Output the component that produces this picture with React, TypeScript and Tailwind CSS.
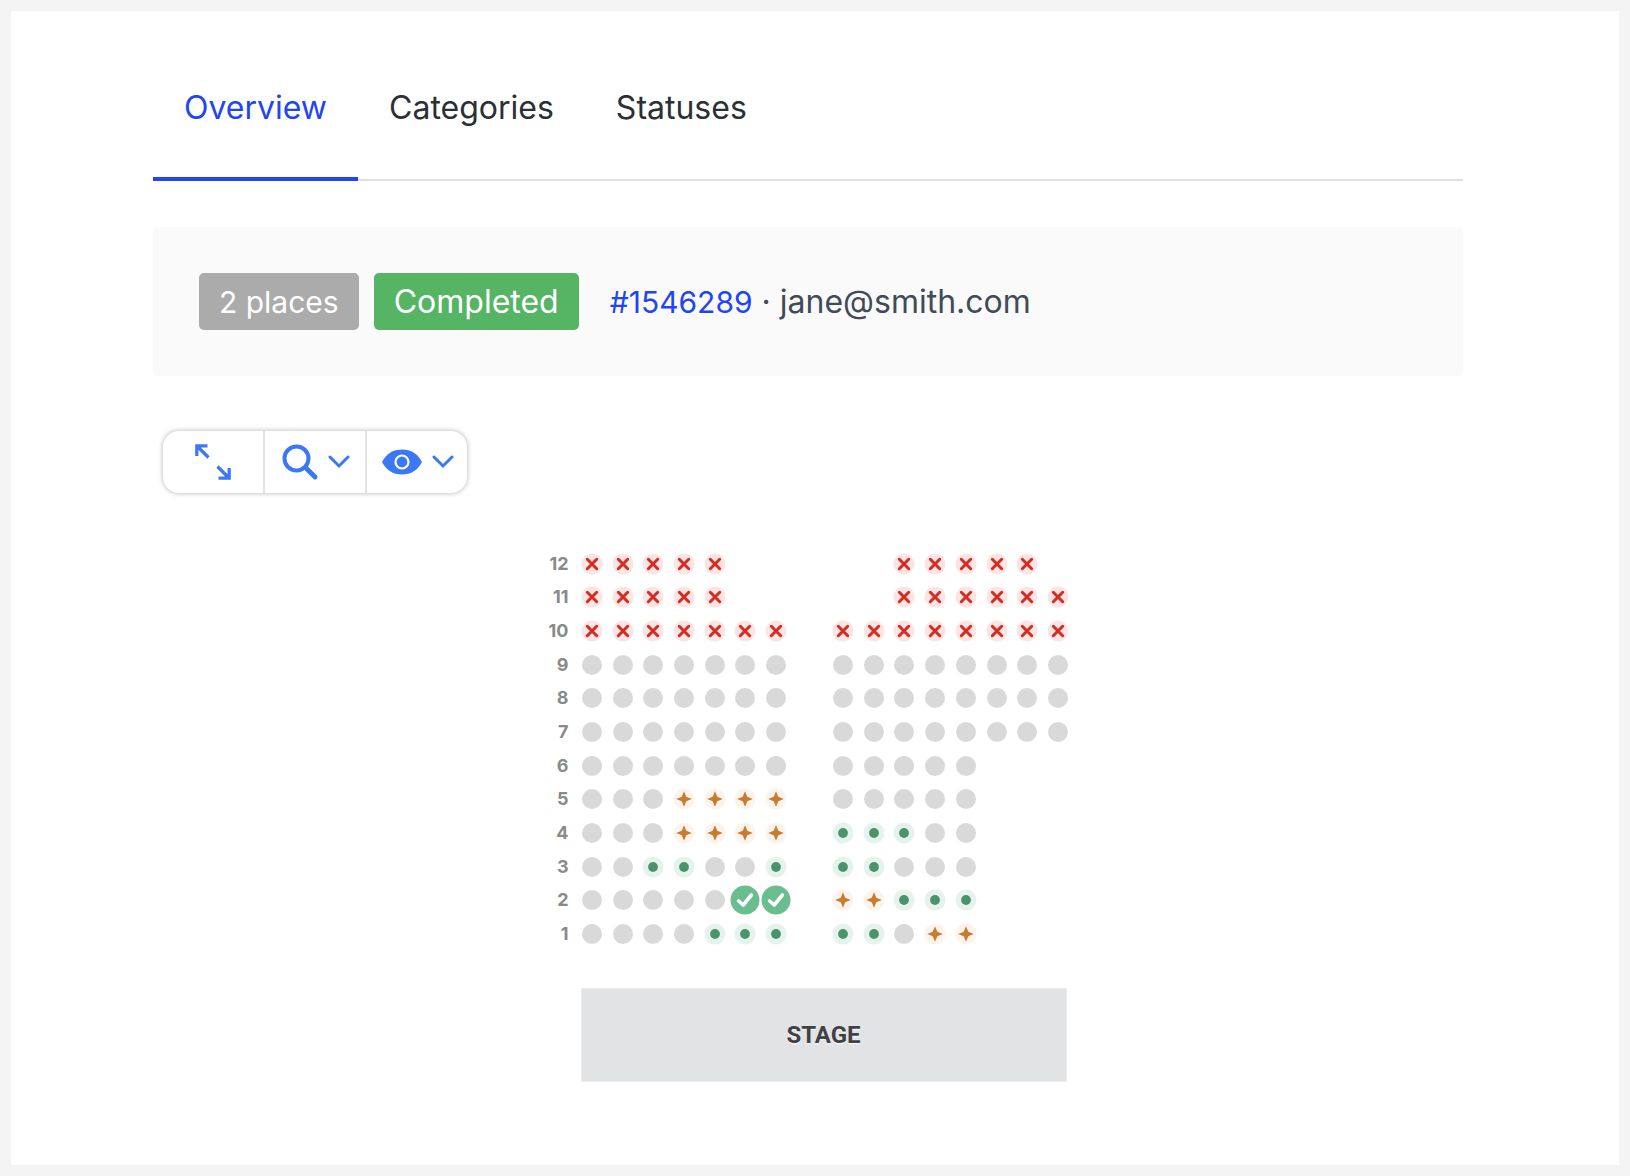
import React from "react";

type SeatKind = "x" | "o" | "s" | "g" | "c" | ".";

const rows: { label: string; left: string; right: string }[] = [
  { label: "12", left: "xxxxx..", right: "..xxxxx." },
  { label: "11", left: "xxxxx..", right: "..xxxxxx" },
  { label: "10", left: "xxxxxxx", right: "xxxxxxxx" },
  { label: "9", left: "ooooooo", right: "oooooooo" },
  { label: "8", left: "ooooooo", right: "oooooooo" },
  { label: "7", left: "ooooooo", right: "oooooooo" },
  { label: "6", left: "ooooooo", right: "ooooo..." },
  { label: "5", left: "ooossss", right: "ooooo..." },
  { label: "4", left: "ooossss", right: "gggoo..." },
  { label: "3", left: "ooggoog", right: "ggooo..." },
  { label: "2", left: "ooooocc", right: "ssggg..." },
  { label: "1", left: "ooooggg", right: "ggoss..." },
];

const kindNames: Record<string, string> = {
  x: "blocked",
  o: "unavailable",
  s: "premium",
  g: "available",
  c: "selected",
};

function SeatGlyph({ kind }: { kind: SeatKind }) {
  return (
    <svg viewBox="-15 -15 30 30" className="size-[30px] shrink-0" aria-hidden="true">
      {kind === "o" && <circle r="10" fill="#d9d9d9" />}
      {kind === "x" && (
        <>
          <circle r="10.5" fill="#fbe5e4" />
          <path d="M-4.7-4.7 4.7 4.7M4.7-4.7-4.7 4.7" stroke="#d42c20" strokeWidth="3" strokeLinecap="round" />
        </>
      )}
      {kind === "s" && (
        <>
          <circle r="10.5" fill="#fcf4ec" />
          <path d="M0-7.8 2.3-2.3 7.8 0 2.3 2.3 0 7.8-2.3 2.3-7.8 0-2.3-2.3Z" fill="#c97b30" />
        </>
      )}
      {kind === "g" && (
        <>
          <circle r="10.5" fill="#e6f2ec" />
          <circle r="4.9" fill="#4b936a" />
        </>
      )}
      {kind === "c" && (
        <>
          <circle r="14.5" fill="#69bd8f" />
          <path d="M-6.4 1-1.8 5 6.4-5" fill="none" stroke="#fff" strokeWidth="3.6" strokeLinecap="round" strokeLinejoin="round" />
        </>
      )}
    </svg>
  );
}

function Seat({ kind, name }: { kind: SeatKind; name: string }) {
  if (kind === ".") return <span />;
  return (
    <button type="button" aria-label={`${name}, ${kindNames[kind]}`} className="flex items-center justify-center">
      <SeatGlyph kind={kind} />
    </button>
  );
}

function Chevron() {
  return (
    <svg viewBox="0 0 22 14" className="h-3.5 w-[22px]" fill="none" stroke="#3b78f5" strokeWidth="3" strokeLinecap="round" aria-hidden="true">
      <path d="M2 2 11 11 20 2" strokeLinejoin="miter" />
    </svg>
  );
}

function Tabs() {
  const tabs = ["Overview", "Categories", "Statuses"];
  return (
    <nav className="flex h-[118px] border-b-2 border-[#e0e0e0] text-[32px] leading-10 text-[#2b3035]">
      {tabs.map((tab, i) => (
        <a
          key={tab}
          href={`#${tab.toLowerCase()}`}
          aria-current={i === 0 ? "page" : undefined}
          className={
            i === 0
              ? "-mb-0.5 border-b-4 border-[#2145f3] px-[31px] pt-[25px] text-[#2145f3]"
              : "px-[31px] pt-[25px]"
          }
        >
          {tab}
        </a>
      ))}
    </nav>
  );
}

function Toolbar() {
  return (
    <div className="ml-2.5 mt-[55px] flex h-[62px] w-fit divide-x-2 divide-[#e2e2e2] rounded-2xl bg-white shadow-[0_0_4px_1px_rgba(0,0,0,0.22)]">
      <button type="button" aria-label="Full screen" className="flex w-[102px] items-center justify-center">
        <svg viewBox="0 0 36 36" className="size-9" fill="none" stroke="#3b78f5" strokeWidth="3.2" aria-hidden="true">
          <path d="M1.8 12V1.8H12.5M2 2 13.5 13.5M34.2 24V34.2H23.5M34 34 22.5 22.5" />
        </svg>
      </button>
      <button type="button" aria-label="Zoom" className="flex w-[102px] items-center justify-center gap-2.5 pl-0.5">
        <svg viewBox="0 0 36 36" className="size-9" fill="none" stroke="#3b78f5" strokeLinecap="round" aria-hidden="true">
          <circle cx="14.5" cy="14.5" r="12" strokeWidth="4" />
          <path d="M23.5 23.5 33 33" strokeWidth="4.8" />
        </svg>
        <Chevron />
      </button>
      <button type="button" aria-label="View options" className="flex w-[100px] items-center justify-center gap-2.5 pl-0.5">
        <svg viewBox="0 0 40 26" className="h-[26px] w-10" aria-hidden="true">
          <path d="M0 13C4 5 11 .5 20 .5S36 5 40 13C36 21 29 25.5 20 25.5S4 21 0 13Z" fill="#3b78f5" />
          <circle cx="20" cy="13" r="6.5" fill="#3b78f5" stroke="#fff" strokeWidth="2.2" />
        </svg>
        <Chevron />
      </button>
    </div>
  );
}

function SeatMap() {
  return (
    <section aria-label="Seating plan" className="mx-auto mt-[54px] w-[531px]">
      <div className="grid h-[404px] auto-rows-fr">
        {rows.map((row) => (
          <div key={row.label} className="flex">
            <span className="flex w-[34px] items-center justify-end pr-2 text-lg leading-5 font-bold text-[#8a8a8a]">
              {row.label}
            </span>
            <div className="grid w-[215px] grid-cols-7">
              {row.left.split("").map((k, i) => (
                <Seat key={i} kind={k as SeatKind} name={`Row ${row.label} seat ${i + 1}`} />
              ))}
            </div>
            <div className="ml-9 grid w-[246px] grid-cols-8">
              {row.right.split("").map((k, i) => (
                <Seat key={i} kind={k as SeatKind} name={`Row ${row.label} seat ${i + 8}`} />
              ))}
            </div>
          </div>
        ))}
      </div>
      <div className="mr-[7px] mt-[37px] ml-[38px] flex h-[94px] items-center justify-center border border-[#ececee] bg-[#e2e3e5] font-[Roboto] text-2xl font-bold text-[#404144] [text-shadow:0_1px_1px_white]">
        STAGE
      </div>
    </section>
  );
}

export default function App() {
  return (
    <div className="min-h-screen bg-[#f4f4f4] p-[11px] font-[Inter,sans-serif]">
      <main className="min-h-[1154px] bg-white pt-[52px] pr-[156px] pb-20 pl-[142px]">
        <Tabs />
        <section className="mt-[46px] flex h-[149px] items-center rounded-md bg-[#fafafa] px-[46px] text-[32px] leading-10">
          <span className="flex h-[57px] min-w-[159px] items-center justify-center rounded-[5px] bg-[#ababab] px-5 text-[30px] text-white">2 places</span>
          <span className="ml-[15px] flex h-[57px] min-w-[204px] items-center justify-center rounded-[5px] bg-[#55b565] px-5 text-white">Completed</span>
          <p className="ml-[31px] text-[#414b57]">
            <a href="#order" className="text-[30px] text-[#2145f3]">#1546289</a> · jane@smith.com
          </p>
        </section>
        <Toolbar />
        <SeatMap />
      </main>
    </div>
  );
}
